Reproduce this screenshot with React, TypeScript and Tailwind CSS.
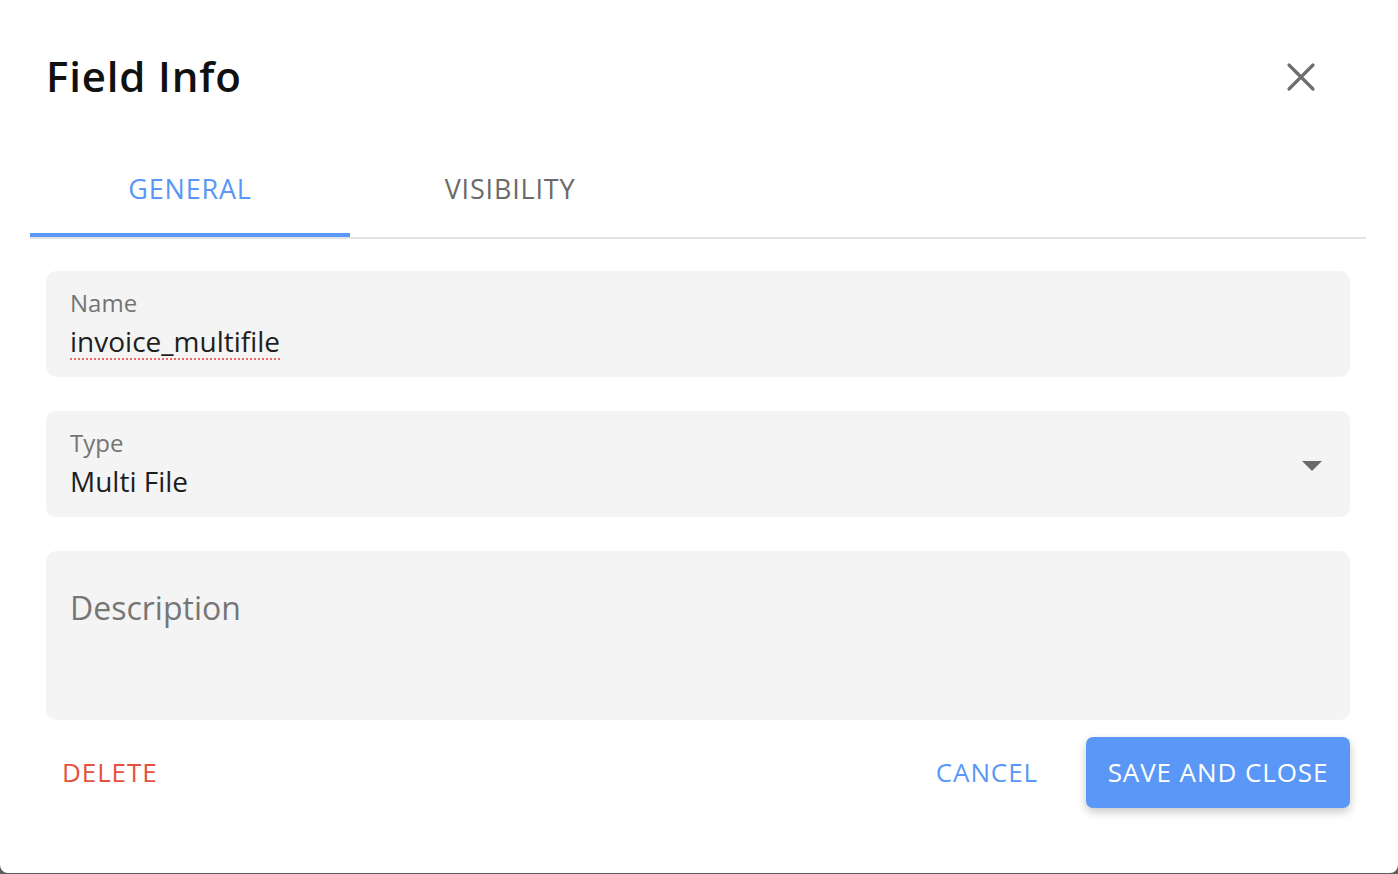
import { useState } from 'react';

type FieldProps = {
  label: string;
  value: string;
  spellcheck?: boolean;
  select?: boolean;
};

const Field = ({ label, value, spellcheck, select }: FieldProps) => {
  return (
    <div className="relative flex h-[106px] flex-col rounded-[10px] bg-[#f4f4f4] px-[24px] pt-[16px]">
      <span className="text-[24px] leading-[31px] text-[#747474]">{label}</span>
      <span className="mt-[4px] text-[28px] leading-[38px] text-[#1e1e1e]">
        {spellcheck ? (
          <span className="underline decoration-[#ea6a62] decoration-dotted decoration-2 underline-offset-[6px]">
            {value}
          </span>
        ) : (
          value
        )}
      </span>
      {select && (
        <svg
          className="absolute right-[28px] top-[50px]"
          width="20"
          height="10"
          viewBox="0 0 20 10"
        >
          <path d="M0 0h20L10 10z" fill="#6b6b6b" />
        </svg>
      )}
    </div>
  );
};

export default function App() {
  const [tab, setTab] = useState('general');
  const tabs = [
    { id: 'general', name: 'GENERAL' },
    { id: 'visibility', name: 'VISIBILITY' },
  ];

  return (
    <div className="h-[874px] w-full bg-[#5e5e5e] font-['Open_Sans',sans-serif]">
      <div className="flex h-[873px] w-full flex-col rounded-b-[8px] bg-white">
        {/* Header */}
        <div className="flex h-[154px] shrink-0 items-center justify-between pl-[46px] pr-[81px]">
          <h2 className="mb-[4px] text-[42px] font-semibold tracking-[0.02em] text-[#111]">
            Field Info
          </h2>
          <button className="flex h-[32px] w-[32px] items-center justify-center">
            <svg width="30" height="30" viewBox="0 0 30 30">
              <path
                d="M3 3L27 27M27 3L3 27"
                stroke="#6e6e6e"
                strokeWidth="3.2"
                strokeLinecap="round"
              />
            </svg>
          </button>
        </div>

        {/* Tabs */}
        <div className="ml-[30px] mr-[32px] flex border-b-2 border-[#e2e2e2]">
          {tabs.map((t) => (
            <button
              key={t.id}
              onClick={() => setTab(t.id)}
              className={`relative flex h-[83px] w-[320px] items-center justify-center pb-[12px] text-[27px] tracking-[0.03em] ${
                tab === t.id ? 'text-[#5a97f6]' : 'text-[#6a6a6a]'
              }`}
            >
              {t.name}
              {tab === t.id && (
                <span className="absolute bottom-0 left-0 h-[4px] w-full bg-[#5a97f6]" />
              )}
            </button>
          ))}
        </div>

        {/* Fields */}
        <div className="ml-[46px] mr-[48px] mt-[32px] flex flex-col gap-[34px]">
          <Field label="Name" value="invoice_multifile" spellcheck />
          <Field label="Type" value="Multi File" select />
          <div className="h-[169px] rounded-[10px] bg-[#f4f4f4] px-[24px] pt-[36px]">
            <span className="text-[32px] leading-[42px] text-[#767676]">Description</span>
          </div>
        </div>

        {/* Footer */}
        <div className="ml-[46px] mr-[48px] mt-[17px] flex items-center justify-between">
          <button className="px-[16px] text-[26px] tracking-[0.035em] text-[#e4513f]">
            DELETE
          </button>
          <div className="flex items-center gap-[48px]">
            <button className="text-[26px] tracking-[0.035em] text-[#5a97f6]">CANCEL</button>
            <button className="h-[71px] w-[264px] rounded-[7px] bg-[#5a97f6] text-[26px] tracking-[0.035em] text-white shadow-[0_4px_10px_rgba(0,0,0,0.22)]">
              SAVE AND CLOSE
            </button>
          </div>
        </div>
      </div>
    </div>
  );
}
